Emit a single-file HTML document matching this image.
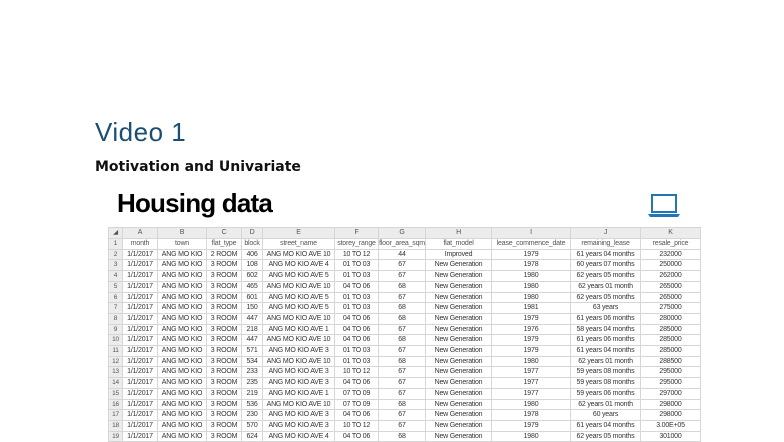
<!DOCTYPE html>
<html><head><meta charset="utf-8"><style>
body{margin:0;width:784px;height:441px;background:#fff;overflow:hidden;position:relative;font-family:"Liberation Sans",sans-serif}
.t1{position:absolute;left:95px;top:117px;font-size:26px;color:#1b4f72;letter-spacing:0.5px}
.t2{position:absolute;left:95px;top:159px;font-weight:bold;color:#111;font-family:"DejaVu Sans",sans-serif;font-size:14px}
.t3{position:absolute;left:117px;top:188px;font-size:26px;font-weight:bold;color:#000;letter-spacing:-0.8px}
table{position:absolute;left:108px;top:227px;width:592px;border-collapse:collapse;table-layout:fixed;font-size:7px;letter-spacing:-0.2px;color:#333}
td{border:1px solid #d6d6d6;height:9.7px;padding:0;text-align:center;white-space:nowrap;overflow:hidden;line-height:9.7px}
tr.h td{background:#ececec;color:#555;height:10px}
td:first-child{background:#ececec;color:#555;font-size:6.5px}
tr.r1 td{color:#555}
</style></head><body>
<div class="t1">Video 1</div>
<div class="t2">Motivation and Univariate</div>
<div class="t3">Housing data</div>
<svg style="position:absolute;left:647px;top:193px" width="34" height="26" viewBox="0 0 34 26"><rect x="5" y="2" width="24" height="17" fill="none" stroke="#1f77b4" stroke-width="2"/><path d="M1 21h32l-2 3H3z" fill="#1f77b4"/></svg>
<table>
<colgroup><col style="width:14px"><col style="width:35px"><col style="width:49px"><col style="width:35px"><col style="width:21px"><col style="width:72px"><col style="width:44px"><col style="width:47px"><col style="width:66px"><col style="width:79px"><col style="width:70px"><col style="width:60px"></colgroup>
<tr class="h"><td>◢</td><td>A</td><td>B</td><td>C</td><td>D</td><td>E</td><td>F</td><td>G</td><td>H</td><td>I</td><td>J</td><td>K</td></tr>
<tr class="r1"><td>1</td><td>month</td><td>town</td><td>flat_type</td><td>block</td><td>street_name</td><td>storey_range</td><td>floor_area_sqm</td><td>flat_model</td><td>lease_commence_date</td><td>remaining_lease</td><td>resale_price</td></tr>
<tr><td>2</td><td>1/1/2017</td><td>ANG MO KIO</td><td>2 ROOM</td><td>406</td><td>ANG MO KIO AVE 10</td><td>10 TO 12</td><td>44</td><td>Improved</td><td>1979</td><td>61 years 04 months</td><td>232000</td></tr>
<tr><td>3</td><td>1/1/2017</td><td>ANG MO KIO</td><td>3 ROOM</td><td>108</td><td>ANG MO KIO AVE 4</td><td>01 TO 03</td><td>67</td><td>New Generation</td><td>1978</td><td>60 years 07 months</td><td>250000</td></tr>
<tr><td>4</td><td>1/1/2017</td><td>ANG MO KIO</td><td>3 ROOM</td><td>602</td><td>ANG MO KIO AVE 5</td><td>01 TO 03</td><td>67</td><td>New Generation</td><td>1980</td><td>62 years 05 months</td><td>262000</td></tr>
<tr><td>5</td><td>1/1/2017</td><td>ANG MO KIO</td><td>3 ROOM</td><td>465</td><td>ANG MO KIO AVE 10</td><td>04 TO 06</td><td>68</td><td>New Generation</td><td>1980</td><td>62 years 01 month</td><td>265000</td></tr>
<tr><td>6</td><td>1/1/2017</td><td>ANG MO KIO</td><td>3 ROOM</td><td>601</td><td>ANG MO KIO AVE 5</td><td>01 TO 03</td><td>67</td><td>New Generation</td><td>1980</td><td>62 years 05 months</td><td>265000</td></tr>
<tr><td>7</td><td>1/1/2017</td><td>ANG MO KIO</td><td>3 ROOM</td><td>150</td><td>ANG MO KIO AVE 5</td><td>01 TO 03</td><td>68</td><td>New Generation</td><td>1981</td><td>63 years</td><td>275000</td></tr>
<tr><td>8</td><td>1/1/2017</td><td>ANG MO KIO</td><td>3 ROOM</td><td>447</td><td>ANG MO KIO AVE 10</td><td>04 TO 06</td><td>68</td><td>New Generation</td><td>1979</td><td>61 years 06 months</td><td>280000</td></tr>
<tr><td>9</td><td>1/1/2017</td><td>ANG MO KIO</td><td>3 ROOM</td><td>218</td><td>ANG MO KIO AVE 1</td><td>04 TO 06</td><td>67</td><td>New Generation</td><td>1976</td><td>58 years 04 months</td><td>285000</td></tr>
<tr><td>10</td><td>1/1/2017</td><td>ANG MO KIO</td><td>3 ROOM</td><td>447</td><td>ANG MO KIO AVE 10</td><td>04 TO 06</td><td>68</td><td>New Generation</td><td>1979</td><td>61 years 06 months</td><td>285000</td></tr>
<tr><td>11</td><td>1/1/2017</td><td>ANG MO KIO</td><td>3 ROOM</td><td>571</td><td>ANG MO KIO AVE 3</td><td>01 TO 03</td><td>67</td><td>New Generation</td><td>1979</td><td>61 years 04 months</td><td>285000</td></tr>
<tr><td>12</td><td>1/1/2017</td><td>ANG MO KIO</td><td>3 ROOM</td><td>534</td><td>ANG MO KIO AVE 10</td><td>01 TO 03</td><td>68</td><td>New Generation</td><td>1980</td><td>62 years 01 month</td><td>288500</td></tr>
<tr><td>13</td><td>1/1/2017</td><td>ANG MO KIO</td><td>3 ROOM</td><td>233</td><td>ANG MO KIO AVE 3</td><td>10 TO 12</td><td>67</td><td>New Generation</td><td>1977</td><td>59 years 08 months</td><td>295000</td></tr>
<tr><td>14</td><td>1/1/2017</td><td>ANG MO KIO</td><td>3 ROOM</td><td>235</td><td>ANG MO KIO AVE 3</td><td>04 TO 06</td><td>67</td><td>New Generation</td><td>1977</td><td>59 years 08 months</td><td>295000</td></tr>
<tr><td>15</td><td>1/1/2017</td><td>ANG MO KIO</td><td>3 ROOM</td><td>219</td><td>ANG MO KIO AVE 1</td><td>07 TO 09</td><td>67</td><td>New Generation</td><td>1977</td><td>59 years 06 months</td><td>297000</td></tr>
<tr><td>16</td><td>1/1/2017</td><td>ANG MO KIO</td><td>3 ROOM</td><td>536</td><td>ANG MO KIO AVE 10</td><td>07 TO 09</td><td>68</td><td>New Generation</td><td>1980</td><td>62 years 01 month</td><td>298000</td></tr>
<tr><td>17</td><td>1/1/2017</td><td>ANG MO KIO</td><td>3 ROOM</td><td>230</td><td>ANG MO KIO AVE 3</td><td>04 TO 06</td><td>67</td><td>New Generation</td><td>1978</td><td>60 years</td><td>298000</td></tr>
<tr><td>18</td><td>1/1/2017</td><td>ANG MO KIO</td><td>3 ROOM</td><td>570</td><td>ANG MO KIO AVE 3</td><td>10 TO 12</td><td>67</td><td>New Generation</td><td>1979</td><td>61 years 04 months</td><td>3.00E+05</td></tr>
<tr><td>19</td><td>1/1/2017</td><td>ANG MO KIO</td><td>3 ROOM</td><td>624</td><td>ANG MO KIO AVE 4</td><td>04 TO 06</td><td>68</td><td>New Generation</td><td>1980</td><td>62 years 05 months</td><td>301000</td></tr>
</table>
</body></html>
